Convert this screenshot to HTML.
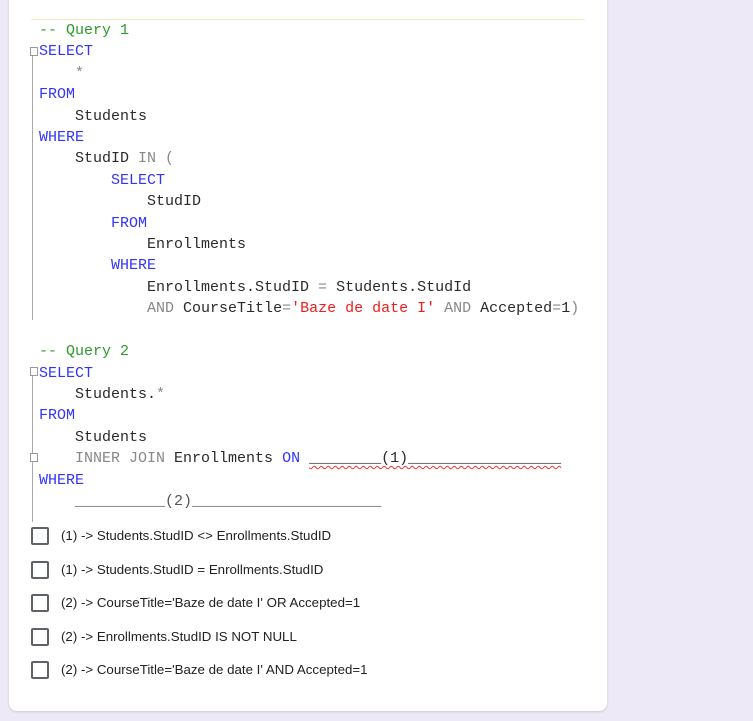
<!DOCTYPE html>
<html><head><style>
html,body{margin:0;padding:0}
body{width:753px;height:721px;background:#ede9f6;position:relative;overflow:hidden;font-family:"Liberation Sans",sans-serif}
.card{position:absolute;left:9px;top:-20px;width:598px;height:731px;background:#fff;border-radius:8px;box-shadow:0 1px 2px rgba(0,0,0,.15)}
.hl{position:absolute;left:31px;top:19px;width:554px;height:1px;background:#f3eec0}
.code{position:absolute;left:39px;top:20px;font-family:"Liberation Mono",monospace;font-size:15px;line-height:21.4px;color:#2a2a2a;white-space:pre}
.k{color:#3333ff}.c{color:#2e9a2e}.g{color:#888}.s{color:#f21c1c}
.sq{text-decoration:underline wavy #e33;text-decoration-thickness:1px;text-underline-offset:3px}
.gut{position:absolute;left:32px;width:1px;background:#aaa}
.box{position:absolute;left:30px;width:6px;height:7px;border:1px solid #999;background:#fff}
.opt{position:absolute;left:31px;height:18px;font-size:13.3px;color:#222}
.opt i{position:absolute;left:0;top:0;width:14px;height:14px;border:2px solid #5f6368;border-radius:2px}
.opt span{position:absolute;left:30px;top:1px;white-space:nowrap}
</style></head><body>
<div class="card"></div>
<div class="hl"></div>
<div class="gut" style="top:54px;height:266px"></div>
<div class="gut" style="top:374px;height:148px"></div>
<div class="box" style="top:47px"></div>
<div class="box" style="top:367px"></div>
<div class="box" style="top:453px"></div>
<div class="code"><span class="c">-- Query 1</span>
<span class="k">SELECT</span>
    <span class="g">*</span>
<span class="k">FROM</span>
    Students
<span class="k">WHERE</span>
    StudID <span class="g">IN (</span>
        <span class="k">SELECT</span>
            StudID
        <span class="k">FROM</span>
            Enrollments
        <span class="k">WHERE</span>
            Enrollments.StudID <span class="g">=</span> Students.StudId
            <span class="g">AND</span> CourseTitle<span class="g">=</span><span class="s">'Baze de date I'</span> <span class="g">AND</span> Accepted<span class="g">=</span>1<span class="g">)</span>

<span class="c">-- Query 2</span>
<span class="k">SELECT</span>
    Students.<span class="g">*</span>
<span class="k">FROM</span>
    Students
    <span class="g">INNER JOIN</span> Enrollments <span class="k">ON</span> <span class="sq">________(1)_________________</span>
<span class="k">WHERE</span>
    <span style="color:#555">__________(2)_____________________</span></div>
<div class="opt" style="top:527px"><i></i><span>(1) -&gt; Students.StudID &lt;&gt; Enrollments.StudID</span></div>
<div class="opt" style="top:561px"><i></i><span>(1) -&gt; Students.StudID = Enrollments.StudID</span></div>
<div class="opt" style="top:594px"><i></i><span>(2) -&gt; CourseTitle='Baze de date I' OR Accepted=1</span></div>
<div class="opt" style="top:628px"><i></i><span>(2) -&gt; Enrollments.StudID IS NOT NULL</span></div>
<div class="opt" style="top:661px"><i></i><span>(2) -&gt; CourseTitle='Baze de date I' AND Accepted=1</span></div>
</body></html>
